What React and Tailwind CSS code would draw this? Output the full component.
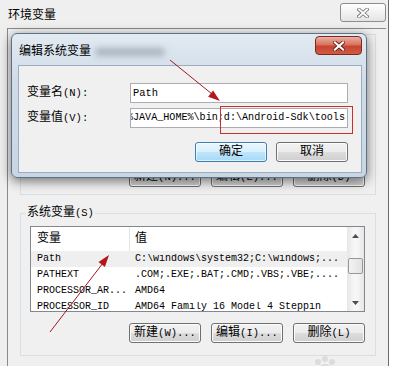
import React from "react";

const rows = [
  ["Path", "C:\\windows\\system32;C:\\windows;..."],
  ["PATHEXT", ".COM;.EXE;.BAT;.CMD;.VBS;.VBE;...."],
  ["PROCESSOR_AR...", "AMD64"],
  ["PROCESSOR_ID", "AMD64 Family 16 Model 4 Steppin"],
];

function Lat({ children }) {
  return <span className="text-[10.5px]">{children}</span>;
}

function WinButton({ children, primary }) {
  return (
    <div
      className={
        primary
          ? "flex h-[20px] w-[72px] items-center justify-center rounded-[3px] border border-[#3c7fb1] bg-[linear-gradient(#eaf6fd_0%,#d9f0fc_50%,#bee6fd_50%,#a7d9f5_100%)] shadow-[inset_0_0_0_1px_#ffffffa0]"
          : "flex h-[20px] w-[72px] items-center justify-center rounded-[3px] border border-[#707070] bg-[linear-gradient(#f2f2f2_0%,#ebebeb_50%,#dddddd_50%,#cfcfcf_100%)] shadow-[inset_0_0_0_1px_#fcfcfc]"
      }
    >
      {children}
    </div>
  );
}

function CloseX({ outline, fill, w }) {
  return (
    <svg width="12" height="10" viewBox="0 0 12 10">
      <path d="M2 1.5 L10 8.5 M10 1.5 L2 8.5" stroke={outline} strokeWidth={w + 1.6} strokeLinecap="square" />
      <path d="M2 1.5 L10 8.5 M10 1.5 L2 8.5" stroke={fill} strokeWidth={w} strokeLinecap="square" />
    </svg>
  );
}

export default function App() {
  return (
    <div className="relative h-[366px] w-[395px] overflow-hidden bg-white text-[12px] leading-none text-black font-['Liberation_Mono','Noto_Sans_CJK_SC',monospace]">
      {/* outer window: 环境变量 */}
      <div className="flex h-full w-[389px] flex-col border-r border-[#6b6b6b] bg-[#efefef] pl-[7px] pr-[2px]">
        <div className="flex h-[28px] shrink-0 items-start justify-between">
          <span className="pl-[1px] pt-[10px]">环境变量</span>
          <div className="mt-[3px] flex h-[19px] w-[46px] items-center justify-center rounded-[3px] border border-[#8d8d8d] bg-gradient-to-b from-white to-[#e4e4e4]">
            <CloseX outline="#6f6f6f" fill="#fafafa" w={2} />
          </div>
        </div>

        <div className="flex-1 border-l border-t border-[#8a8a8a] bg-[#f0f0f0] pl-[12px] pr-[10px]">
          {/* user variables group (mostly hidden) */}
          <div className="mt-[5px] flex h-[161px] flex-col items-end justify-end border border-[#d5dfe5] pb-[7px] pr-[10px]">
            <div className="flex gap-[10px]">
              <WinButton>新建<Lat>(N)...</Lat></WinButton>
              <WinButton>编辑<Lat>(E)...</Lat></WinButton>
              <WinButton>删除<Lat>(D)</Lat></WinButton>
            </div>
          </div>

          {/* system variables group */}
          <div className="relative mt-[18px] flex h-[143px] flex-col border border-[#d5dfe5] pl-[9px] pr-[10px] pt-[12px]">
            <span className="absolute left-[5px] top-[-7px] bg-[#f0f0f0] px-[1px]">
              系统变量<Lat>(S)</Lat>
            </span>

            <div className="flex h-[86px] border border-[#828790] bg-white">
              <div className="flex w-[316px] flex-col overflow-hidden">
                <div className="flex h-[24px] shrink-0 items-center">
                  <div className="flex h-full w-[99px] items-center border-r border-[#e5e5e5] pl-[6px]">变量</div>
                  <div className="pl-[5px]">值</div>
                </div>
                {rows.map(([name, value], i) => (
                  <div
                    key={name}
                    className={
                      i === 0
                        ? "flex h-[16px] shrink-0 items-center bg-[#efefef] text-[10px]"
                        : "flex h-[16px] shrink-0 items-center text-[10px]"
                    }
                  >
                    <div className="w-[99px] shrink-0 overflow-hidden whitespace-nowrap pl-[6px]">{name}</div>
                    <div className="overflow-hidden whitespace-nowrap pl-[5px]">{value}</div>
                  </div>
                ))}
              </div>
              <div className="flex w-[17px] flex-col bg-[linear-gradient(90deg,#e6e6e6,#f6f6f6_40%,#f6f6f6_60%,#e6e6e6)]">
                <div className="flex h-[17px] items-center justify-center">
                  <svg width="7" height="4" viewBox="0 0 7 4">
                    <path d="M0 4 L3.5 0 L7 4 Z" fill="#4d4d4d" />
                  </svg>
                </div>
                <div className="mx-[1px] mt-[14px] h-[16px] rounded-[2px] border border-[#979797] bg-[linear-gradient(90deg,#f3f3f3,#e2e2e2)]" />
                <div className="flex-1" />
                <div className="flex h-[17px] items-center justify-center">
                  <svg width="7" height="4" viewBox="0 0 7 4">
                    <path d="M0 0 L7 0 L3.5 4 Z" fill="#4d4d4d" />
                  </svg>
                </div>
              </div>
            </div>

            <div className="mt-[11px] flex justify-end gap-[10px]">
              <WinButton>新建<Lat>(W)...</Lat></WinButton>
              <WinButton>编辑<Lat>(I)...</Lat></WinButton>
              <WinButton>删除<Lat>(L)</Lat></WinButton>
            </div>
          </div>
        </div>
      </div>

      {/* dialog: 编辑系统变量 */}
      <div className="absolute left-[11px] top-[33px] flex h-[145px] w-[356px] flex-col rounded-[6px] border border-[#5e7186] bg-[linear-gradient(#e2eaf2,#cfdbe7_35%,#c8d6e4)] pb-[4px] pl-[6px] pr-[4px] shadow-[0_3px_12px_rgba(0,0,0,0.55)]">
        <div className="flex h-[31px] shrink-0 items-start justify-between">
          <div className="flex items-center pl-[1px] pt-[12px]">
            <span>编辑系统变量</span>
            <span className="ml-[4px] h-[8px] w-[70px] rounded-full bg-[#a9b3bd] blur-[3px]" />
          </div>
          <div className="mt-[2px] flex h-[19px] w-[47px] items-center justify-center rounded-[4px] border border-[#7c2a1e] bg-[linear-gradient(#eab0a4,#d8735f_45%,#c8452f_55%,#d05a42)]">
            <CloseX outline="#5b1d14" fill="#ffffff" w={2.2} />
          </div>
        </div>

        <div className="flex flex-1 flex-col border border-[#9badc1] bg-[#f0f0f0] pl-[8px] pr-[13px]">
          <div className="mt-[17px] flex items-center">
            <div className="w-[104px]">变量名<Lat>(N):</Lat></div>
            <div className="flex h-[20px] w-[220px] items-center border border-[#abadb3] bg-white pl-[2px] text-[10.4px]">
              Path
            </div>
          </div>
          <div className="mt-[5px] flex items-center">
            <div className="w-[104px]">变量值<Lat>(V):</Lat></div>
            <div className="flex h-[20px] w-[220px] items-center justify-end overflow-hidden whitespace-nowrap border border-[#abadb3] bg-white pr-[2px] text-[10.1px]">
              %;%JAVA_HOME%\bin;d:\Android-Sdk\tools
            </div>
          </div>
          <div className="mt-[14px] flex justify-end gap-[9px]">
            <WinButton primary>确定</WinButton>
            <WinButton>取消</WinButton>
          </div>
        </div>
      </div>

      {/* annotations */}
      <svg className="pointer-events-none absolute inset-0" width="395" height="366" viewBox="0 0 395 366">
        <rect x="220.5" y="106.5" width="132" height="27" fill="none" stroke="#c8302c" strokeWidth="1" />
        <line x1="170" y1="60" x2="212" y2="94" stroke="#9e1b1f" strokeWidth="1" />
        <path d="M220 101 L208.1 96.7 L213.1 90.5 Z" fill="#b5161c" />
        <line x1="50" y1="332" x2="103" y2="263" stroke="#9e1b1f" strokeWidth="1" />
        <path d="M109 255 L104.9 266.9 L98.5 262.1 Z" fill="#b5161c" />
        <g fill="#cfcfcf" opacity="0.6">
          <circle cx="318" cy="362" r="3" />
          <circle cx="325" cy="359" r="3" />
          <circle cx="332" cy="362" r="3" />
          <ellipse cx="325" cy="368" rx="6" ry="4" />
        </g>
      </svg>
    </div>
  );
}
